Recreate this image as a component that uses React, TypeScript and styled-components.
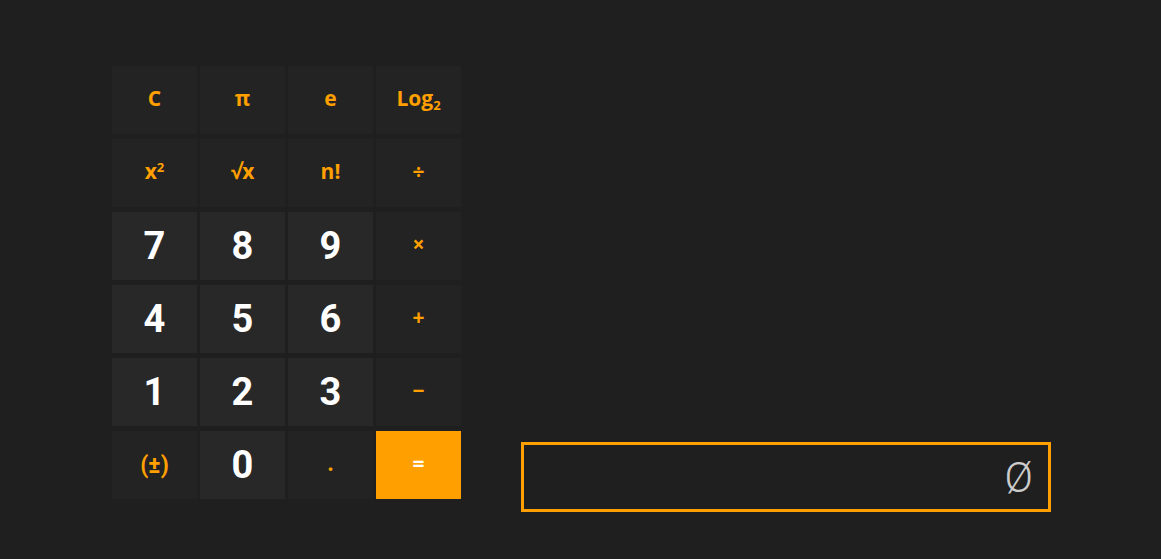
import React from 'react';
import styled, { createGlobalStyle, css } from 'styled-components';

type Kind = 'fn' | 'num' | 'sign' | 'eq';

type Key = {
  label: React.ReactNode;
  kind: Kind;
};

const GlobalStyle = createGlobalStyle`
  html, body {
    margin: 0;
    background: #1f1f1f;
    font-family: "Open Sans", "Liberation Sans", sans-serif;
  }
`;

const Page = styled.div`
  display: flex;
  align-items: flex-start;
  gap: 60px;
  padding: 66px 0 0 112px;
  height: 559px;
  box-sizing: border-box;
`;

const Keypad = styled.div`
  display: grid;
  grid-template-columns: repeat(4, 85px);
  grid-auto-rows: 68px;
  column-gap: 3px;
  row-gap: 5px;
`;

const Button = styled.button<{ kind: Kind }>`
  display: flex;
  align-items: center;
  justify-content: center;
  border: none;
  padding: 0 0 3px;
  margin: 0;
  cursor: pointer;
  font-family: "Open Sans", "Liberation Sans", sans-serif;
  font-weight: 700;
  font-size: 21px;
  color: #ffa000;
  background: #232323;

  ${({ kind }) =>
    kind === 'num' &&
    css`
      background: #282828;
      color: #ffffff;
      font-family: Roboto, "Liberation Sans", sans-serif;
      font-size: 38px;
      padding: 0 0 1px;
    `}

  ${({ kind }) =>
    kind === 'sign' &&
    css`
      font-family: Roboto, "Liberation Sans", sans-serif;
      font-size: 23px;
      padding: 0;
    `}

  ${({ kind }) =>
    kind === 'eq' &&
    css`
      background: #ffa000;
      color: #ffffff;
    `}
`;

const Label = styled.span`
  display: inline-block;
  line-height: 1;
`;

const Sub = styled.sub`
  font-size: 13px;
  vertical-align: -4px;
  line-height: 0;
`;

const Sup = styled.sup`
  font-size: 13px;
  vertical-align: 7px;
  line-height: 0;
`;

const Display = styled.div`
  margin-top: 376px;
  width: 530px;
  height: 70px;
  box-sizing: border-box;
  border: 3px solid #ffa000;
  display: flex;
  align-items: center;
  justify-content: flex-end;
  padding-right: 15px;
  color: #cccccc;
  font-family: Roboto, "Liberation Sans", sans-serif;
  font-weight: 300;
  font-size: 42px;
`;

const keys: Key[] = [
  { label: 'C', kind: 'fn' },
  { label: 'π', kind: 'fn' },
  { label: 'e', kind: 'fn' },
  { label: <>Log<Sub>2</Sub></>, kind: 'fn' },
  { label: <>x<Sup>2</Sup></>, kind: 'fn' },
  { label: '√x', kind: 'fn' },
  { label: 'n!', kind: 'fn' },
  { label: '÷', kind: 'fn' },
  { label: '7', kind: 'num' },
  { label: '8', kind: 'num' },
  { label: '9', kind: 'num' },
  { label: '×', kind: 'fn' },
  { label: '4', kind: 'num' },
  { label: '5', kind: 'num' },
  { label: '6', kind: 'num' },
  { label: '+', kind: 'fn' },
  { label: '1', kind: 'num' },
  { label: '2', kind: 'num' },
  { label: '3', kind: 'num' },
  { label: '−', kind: 'fn' },
  { label: '(±)', kind: 'sign' },
  { label: '0', kind: 'num' },
  { label: '.', kind: 'fn' },
  { label: '=', kind: 'eq' },
];

export default function App() {
  return (
    <>
      <GlobalStyle />
      <Page>
        <Keypad>
          {keys.map((k, i) => (
            <Button key={i} kind={k.kind}>
              <Label>{k.label}</Label>
            </Button>
          ))}
        </Keypad>
        <Display>Ø</Display>
      </Page>
    </>
  );
}
